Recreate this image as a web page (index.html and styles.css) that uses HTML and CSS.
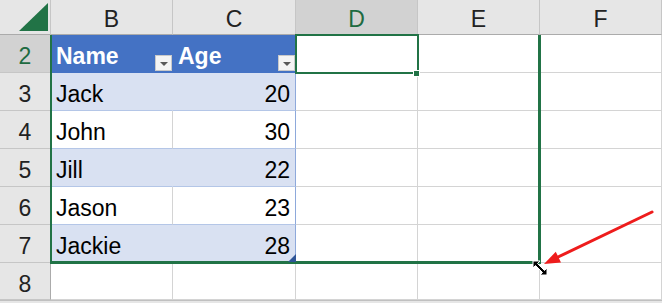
FILE: index.html
```html
<!DOCTYPE html>
<html lang="en">
<head>
    <meta charset="UTF-8">
    <title>Table resize</title>
    <link rel="stylesheet" href="styles.css">
</head>
<body>
    <div class="sheet">
        <!-- Column headers -->
        <div class="cell corner">
            <svg width="51" height="35" viewBox="0 0 51 35"><polygon points="19,31 48,31 48,3" fill="#217346"/></svg>
        </div>
        <div class="cell col-head">B</div>
        <div class="cell col-head">C</div>
        <div class="cell col-head active">D</div>
        <div class="cell col-head">E</div>
        <div class="cell col-head">F</div>

        <!-- Row 2: table header -->
        <div class="cell row-head active">2</div>
        <div class="cell th"><span>Name</span><span class="filter"></span></div>
        <div class="cell th th-last"><span>Age</span><span class="filter"></span></div>
        <div class="cell"></div>
        <div class="cell"></div>
        <div class="cell"></div>

        <div class="cell row-head">3</div>
        <div class="cell band">Jack</div>
        <div class="cell band num last">20</div>
        <div class="cell"></div>
        <div class="cell"></div>
        <div class="cell"></div>

        <div class="cell row-head">4</div>
        <div class="cell plain">John</div>
        <div class="cell plain num last">30</div>
        <div class="cell"></div>
        <div class="cell"></div>
        <div class="cell"></div>

        <div class="cell row-head">5</div>
        <div class="cell band">Jill</div>
        <div class="cell band num last">22</div>
        <div class="cell"></div>
        <div class="cell"></div>
        <div class="cell"></div>

        <div class="cell row-head">6</div>
        <div class="cell plain">Jason</div>
        <div class="cell plain num last">23</div>
        <div class="cell"></div>
        <div class="cell"></div>
        <div class="cell"></div>

        <div class="cell row-head">7</div>
        <div class="cell band">Jackie</div>
        <div class="cell band num last">28</div>
        <div class="cell"></div>
        <div class="cell"></div>
        <div class="cell"></div>

        <div class="cell row-head">8</div>
        <div class="cell"></div>
        <div class="cell"></div>
        <div class="cell"></div>
        <div class="cell"></div>
        <div class="cell"></div>

        <div class="edge"></div>

        <!-- Overlays -->
        <div class="drag-outline"></div>
        <div class="active-cell"></div>
        <div class="fill-handle"></div>
        <svg class="grip" width="8" height="8" viewBox="0 0 8 8"><polygon points="8,0 8,8 0,8" fill="#2f5597"/></svg>
        <svg class="cursor" width="18" height="18" viewBox="0 0 18 18">
            <path d="M2 2 L9 2 L6.5 4.5 L13.5 11.5 L16 9 L16 16 L9 16 L11.5 13.5 L4.5 6.5 L2 9 Z" fill="#000" stroke="#fff" stroke-width="1"/>
        </svg>
        <svg class="arrow" width="662" height="303" viewBox="0 0 662 303">
            <line x1="652" y1="212" x2="556" y2="258" stroke="#ee1c1c" stroke-width="3" stroke-linecap="round"/>
            <polygon points="544,264 561,262.5 555.8,251.7" fill="#ee1c1c"/>
        </svg>
    </div>
</body>
</html>
```

FILE: styles.css
```css
body { margin: 0; background: #fff; font-family: "Liberation Sans", Arial, sans-serif; color: #000; }
.sheet { position: relative; display: grid; grid-template-columns: 51px 122px 123px 122px 122px 122px; grid-template-rows: 35px repeat(6, 38px) 37px 3px; width: 662px; height: 303px; overflow: hidden; }
.cell { box-sizing: border-box; border-right: 1px solid #d4d4d4; border-bottom: 1px solid #d4d4d4; font-size: 23px; line-height: 34px; padding: 4px 5px 0; white-space: nowrap; overflow: hidden; }

.corner { background: #e6e6e6; padding: 0; border-right-color: #c6c6c6; border-bottom-color: #ababab; }
.corner svg { display: block; }
.col-head { background: #e6e6e6; text-align: center; color: #222; line-height: 30px; padding-top: 4px; border-right-color: #c6c6c6; border-bottom-color: #ababab; }
.row-head { background: #e6e6e6; text-align: center; color: #222; padding-left: 0; padding-right: 0; border-right-color: #ababab; border-bottom-color: #c6c6c6; }
.active { background: #d2d2d2; color: #1e6b41; }

.th { display: flex; align-items: flex-start; background: #4472c4; color: #fff; font-weight: bold; padding-right: 0; border-right-color: #4472c4; border-bottom-color: #4472c4; }
.th-last { border-right-color: #8ea9db; }
.filter { position: relative; margin-left: auto; margin-top: 16px; width: 17px; height: 16px; box-sizing: border-box; background: #f4f4f4; border: 1px solid #c9c9c9; }
.filter::after { content: ""; position: absolute; left: 4px; top: 6px; border-left: 4px solid transparent; border-right: 4px solid transparent; border-top: 4px solid #595959; }

.band { background: #d9e1f2; border-right-color: #d9e1f2; border-bottom-color: #b4c6e7; }
.plain { border-bottom-color: #b4c6e7; }
.num { text-align: right; }
.last { border-right-color: #8ea9db; }

.edge { grid-column: 1 / -1; background: #e6e6e6; border-top: 1px solid #c0c0c0; }

.drag-outline { position: absolute; left: 50px; top: 35px; width: 491px; height: 229px; box-sizing: border-box; border-left: 2px solid #217346; border-right: 3px solid #217346; border-bottom: 3px solid #217346; }
.active-cell { position: absolute; left: 295px; top: 34px; width: 124px; height: 40px; box-sizing: border-box; border: 2px solid #217346; }
.fill-handle { position: absolute; left: 413px; top: 70px; width: 5px; height: 5px; background: #217346; border: 1px solid #fff; }
.grip { position: absolute; left: 288px; top: 254px; }
.cursor { position: absolute; left: 531px; top: 259px; }
.arrow { position: absolute; left: 0; top: 0; pointer-events: none; }
```
